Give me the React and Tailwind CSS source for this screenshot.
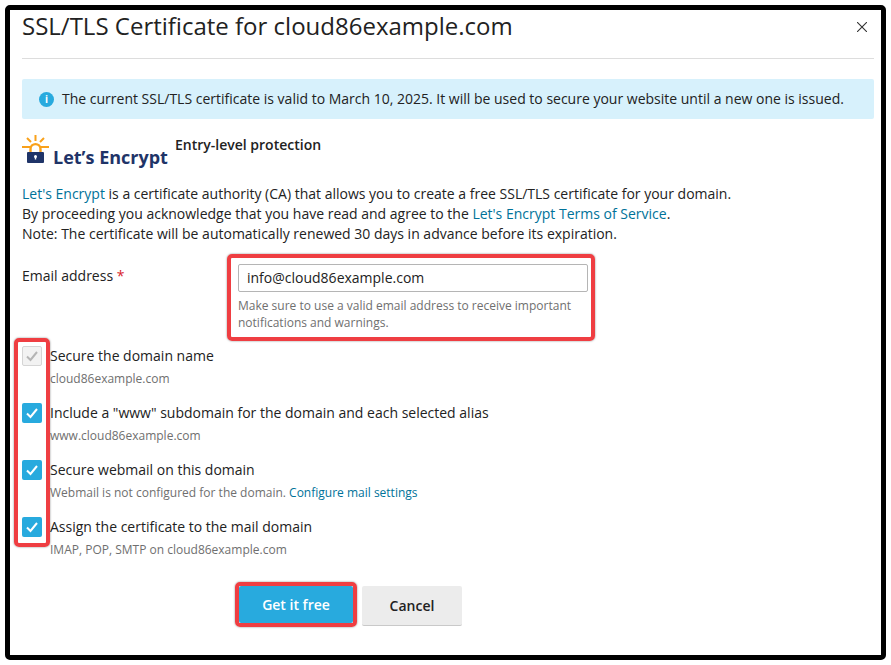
import React from 'react';

const rows = [
  { label: 'Secure the domain name', sub: 'cloud86example.com', disabled: true },
  { label: 'Include a "www" subdomain for the domain and each selected alias', sub: 'www.cloud86example.com' },
  { label: 'Secure webmail on this domain', sub: 'Webmail is not configured for the domain. ', link: 'Configure mail settings' },
  { label: 'Assign the certificate to the mail domain', sub: 'IMAP, POP, SMTP on cloud86example.com' },
];

const Check = ({ disabled }) => (
  <div className={disabled
    ? 'w-5 h-5 shrink-0 rounded-[2px] border border-[#d5d5d5] bg-[#f2f2f2] flex items-center justify-center'
    : 'w-5 h-5 shrink-0 rounded-[2px] bg-[#28aade] flex items-center justify-center'}>
    <svg width="14" height="14" viewBox="0 0 14 14" fill="none">
      <path d="M2 7.5 L5.5 11 L12 3" stroke={disabled ? '#b5b5b5' : '#ffffff'} strokeWidth="2" />
    </svg>
  </div>
);

const Logo = () => (
  <div className="flex items-start w-[146px] h-[35px]">
    <svg width="27" height="29" viewBox="0 0 27 29" fill="none" className="shrink-0">
      <path d="M13.5 0 V6 M0 12 H8 M19 12 H27 M5 3 L9 7 M22 3 L18 7" stroke="#f9a11b" strokeWidth="2" />
      <path d="M8.5 18 V14 C8.5 7.5 18.5 7.5 18.5 14 V18" stroke="#f9a11b" strokeWidth="2.4" />
      <rect x="5" y="17" width="17" height="11" rx="1" fill="#1f3468" />
      <circle cx="13.5" cy="21.5" r="1.5" fill="#ffffff" />
      <rect x="12.8" y="21.5" width="1.4" height="3" fill="#ffffff" />
    </svg>
    <span className="ml-1 mt-[9px] font-bold text-[#1f3468] text-[18px] leading-[26px] whitespace-nowrap">Let’s Encrypt</span>
  </div>
);

export default function App() {
  return (
    <div className="w-[891px] h-[665px] bg-white p-[5px] overflow-hidden font-['Open_Sans',sans-serif] text-[14px] leading-5 text-[#222222]">
      <div className="relative w-[881px] h-[655px] border-[5px] border-black rounded-[5px] bg-white pl-3 pr-[7px]">
        <div className="flex items-start justify-between h-[49px] border-b border-[#dddddd]">
          <h1 className="text-[24px] leading-[33px] mt-[-1px]">SSL/TLS Certificate for cloud86example.com</h1>
        </div>
        <button className="absolute right-[14px] top-[12px] text-[#333333]">
          <svg width="10" height="10" viewBox="0 0 10 10" stroke="currentColor" strokeWidth="1.1" fill="none" className="block">
            <path d="M0 0 L10 10 M10 0 L0 10" />
          </svg>
        </button>

        <div className="mt-5 h-10 bg-[#d7f1fc] rounded-[2px] flex items-center pl-[17px] gap-2">
          <div className="w-[15px] h-[15px] rounded-full bg-[#28aade] text-white flex items-center justify-center text-[10px] leading-none font-bold">i</div>
          <span>The current SSL/TLS certificate is valid to March 10, 2025. It will be used to secure your website until a new one is issued.</span>
        </div>

        <div className="mt-4 flex items-start h-[35px]">
          <Logo />
          <span className="ml-[7px] font-semibold">Entry-level protection</span>
        </div>

        <div className="mt-[14px]">
          <p><a className="text-[#007299]">Let's Encrypt</a> is a certificate authority (CA) that allows you to create a free SSL/TLS certificate for your domain.</p>
          <p>By proceeding you acknowledge that you have read and agree to the <a className="text-[#007299]">Let's Encrypt Terms of Service</a>.</p>
          <p>Note: The certificate will be automatically renewed 30 days in advance before its expiration.</p>
        </div>

        <div className="mt-[10px] flex items-start">
          <label className="w-[205px] shrink-0 pt-[12px]">Email address <span className="text-[#d8232a]">*</span></label>
          <div className="w-[368px] h-[87px] border-4 border-[#ef3e42] rounded-[5px] shadow-[0_0_2px_rgba(0,0,0,0.5)] pt-[6px] pl-[7px] pr-[3px]">
            <div className="w-[350px] h-[28px] border border-[#b5b5b5] rounded-[2px] pl-2 flex items-center text-[14px]">info@cloud86example.com</div>
            <p className="mt-[5px] text-[12px] leading-[17px] text-[#6f6f6f]">Make sure to use a valid email address to receive important notifications and warnings.</p>
          </div>
        </div>

        <div className="relative mt-[5px] flex flex-col">
          <div className="absolute left-[-8px] top-[-8px] w-9 h-[209px] border-4 border-[#ef3e42] rounded-[5px] shadow-[0_0_2px_rgba(0,0,0,0.5)]" />
          {rows.map((r) => (
            <div key={r.label} className="flex items-start h-[57px]">
              <Check disabled={r.disabled} />
              <div className="ml-2">
                <div>{r.label}</div>
                <div className="mt-[4px] text-[12px] leading-[17px] text-[#6f6f6f]">
                  {r.sub}{r.link && <a className="text-[#007299]">{r.link}</a>}
                </div>
              </div>
            </div>
          ))}
        </div>

        <div className="mt-2 ml-[213px] flex items-start gap-[5px]">
          <div className="border-4 border-[#ef3e42] rounded-[5px] shadow-[0_0_2px_rgba(0,0,0,0.5)]">
            <button className="block w-[114px] h-[37px] bg-[#28aade] text-white font-semibold rounded-[2px]">Get it free</button>
          </div>
          <button className="mt-1 w-[100px] h-10 bg-[#ececec] border-b border-[#c9c9c9] rounded-[2px] font-semibold text-[#222222]">Cancel</button>
        </div>
      </div>
    </div>
  );
}
